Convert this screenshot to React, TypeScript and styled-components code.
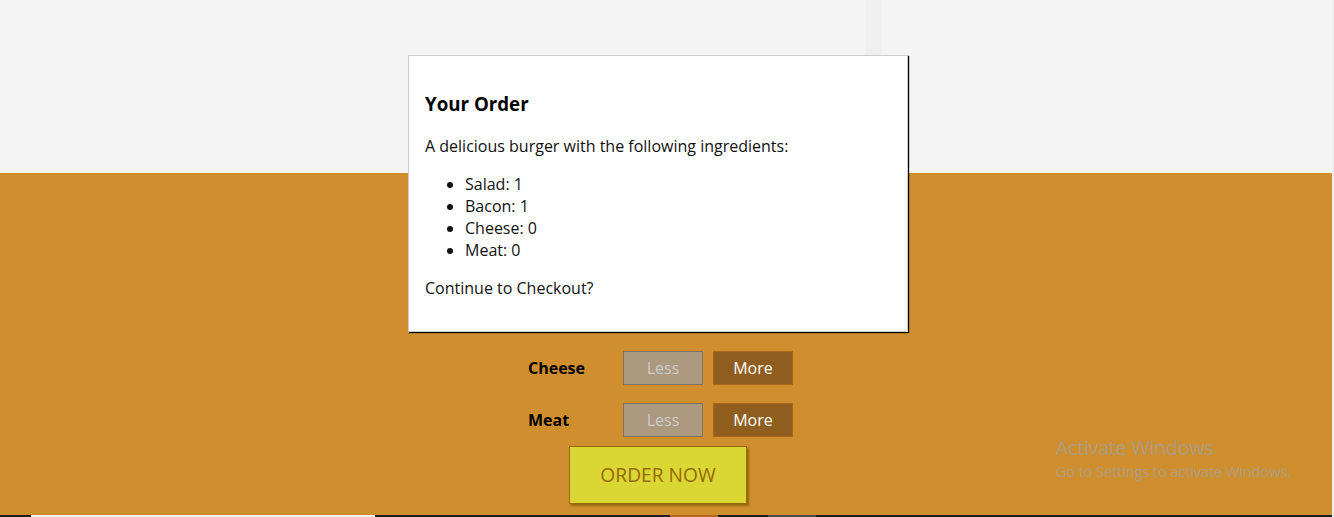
import React from 'react';
import styled, { createGlobalStyle } from 'styled-components';

const GlobalStyle = createGlobalStyle`
  html, body {
    margin: 0;
    padding: 0;
    height: 100%;
    overflow: hidden;
  }
  body {
    font-family: 'Open Sans', 'Noto Sans', sans-serif;
    background: #eeeeee;
  }
  #root {
    height: 100%;
  }
  * {
    box-sizing: border-box;
  }
`;

interface Ingredient {
  label: string;
  type: string;
  count: number;
}

const ingredients: Ingredient[] = [
  { label: 'Salad', type: 'salad', count: 1 },
  { label: 'Bacon', type: 'bacon', count: 1 },
  { label: 'Cheese', type: 'cheese', count: 0 },
  { label: 'Meat', type: 'meat', count: 0 },
];

function BuildControl({ label, count }: Ingredient) {
  return (
    <ControlRow>
      <ControlLabel>{label}</ControlLabel>
      <LessButton disabled={count <= 0}>Less</LessButton>
      <MoreButton>More</MoreButton>
    </ControlRow>
  );
}

function OrderSummary() {
  return (
    <Modal>
      <SummaryTitle>Your Order</SummaryTitle>
      <SummaryText>A delicious burger with the following ingredients:</SummaryText>
      <SummaryList>
        {ingredients.map((ing) => (
          <li key={ing.type}>
            {ing.label}: {ing.count}
          </li>
        ))}
      </SummaryList>
      <SummaryText>Continue to Checkout?</SummaryText>
    </Modal>
  );
}

function App() {
  return (
    <>
      <GlobalStyle />
      <Page>
        <BurgerArea>
          <ScrollTrack />
        </BurgerArea>
        <BuildControls>
          <CurrentPrice>
            Current Price: <strong>5.70</strong>
          </CurrentPrice>
          {ingredients.map((ing) => (
            <BuildControl key={ing.type} {...ing} />
          ))}
          <OrderButton>ORDER NOW</OrderButton>
          <Watermark>
            <WatermarkTitle>Activate Windows</WatermarkTitle>
            <WatermarkText>Go to Settings to activate Windows.</WatermarkText>
          </Watermark>
        </BuildControls>
        <Taskbar>
          <TaskSearch />
          <TaskItem $color="#b7651e" $left={295} />
          <TaskItem $color="#4a4a4a" $left={50} />
        </Taskbar>
        <OrderSummary />
      </Page>
    </>
  );
}

export default App;

const Page = styled.div`
  position: relative;
  display: flex;
  flex-direction: column;
  width: calc(100% - 2px);
  height: 100%;
`;

const BurgerArea = styled.div`
  display: flex;
  height: 173px;
  background: #f4f4f4;
`;

const ScrollTrack = styled.div`
  width: 16px;
  margin-left: 866px;
  background: #efefef;
`;

const BuildControls = styled.div`
  position: relative;
  flex: 1;
  display: flex;
  flex-direction: column;
  align-items: center;
  padding: 11px 16px 0 0;
  background: #cf8f2e;
`;

const CurrentPrice = styled.p`
  margin: 16px 0;
  font-size: 16px;
  line-height: 22px;
`;

const ControlRow = styled.div`
  display: flex;
  justify-content: space-between;
  align-items: center;
  margin: 5px 0;
`;

const ControlLabel = styled.div`
  box-sizing: content-box;
  width: 80px;
  padding: 10px;
  font-weight: bold;
  font-size: 16px;
  line-height: 22px;
  color: #000;
`;

const ControlButton = styled.button`
  display: block;
  width: 80px;
  margin: 0 5px;
  padding: 5px;
  font-family: inherit;
  font-size: 16px;
  line-height: 22px;
  color: white;
  border: 1px solid #aa6817;
  outline: none;
  cursor: pointer;
`;

const LessButton = styled(ControlButton)`
  background: #d39952;
  &:disabled {
    background: #ac9980;
    border: 1px solid #7e7365;
    color: #cccccc;
    cursor: default;
  }
`;

const MoreButton = styled(ControlButton)`
  background: #8f5e1e;
`;

const OrderButton = styled.button`
  padding: 15px 30px;
  background: #dad735;
  border: 1px solid #966909;
  color: #966909;
  font-family: inherit;
  font-size: 19.2px;
  line-height: 26px;
  box-shadow: 2px 2px 2px #966909;
  outline: none;
  cursor: pointer;
`;

const Watermark = styled.div`
  position: absolute;
  left: 1056px;
  top: 263px;
  color: rgba(160, 158, 152, 0.8);
  font-family: 'Open Sans', 'Noto Sans', sans-serif;
  pointer-events: none;
`;

const WatermarkTitle = styled.div`
  font-size: 20px;
  line-height: 24px;
  letter-spacing: -0.4px;
`;

const WatermarkText = styled.div`
  font-size: 15px;
  line-height: 22px;
  letter-spacing: -0.3px;
`;

const Taskbar = styled.div`
  display: flex;
  height: 2px;
  background: #1f1f1f;
  padding-left: 31px;
`;

const TaskSearch = styled.div`
  width: 344px;
  background: #f2f2f2;
`;

const TaskItem = styled.div<{ $color: string; $left: number }>`
  width: 48px;
  margin-left: ${({ $left }) => $left}px;
  background: ${({ $color }) => $color};
`;

const Modal = styled.div`
  position: absolute;
  z-index: 500;
  top: 55px;
  left: 408px;
  width: 500px;
  padding: 16px;
  background: white;
  border: 1px solid #ccc;
  box-shadow: 1px 1px 1px black;
  color: #111;
  font-size: 16px;
`;

const SummaryTitle = styled.h3`
  margin: 18.72px 0;
  font-size: 18.72px;
  line-height: 25.5px;
  font-weight: bold;
  color: #000;
`;

const SummaryText = styled.p`
  margin: 16px 0;
  line-height: 22px;
`;

const SummaryList = styled.ul`
  margin: 16px 0;
  padding-left: 40px;
  line-height: 22px;
`;
